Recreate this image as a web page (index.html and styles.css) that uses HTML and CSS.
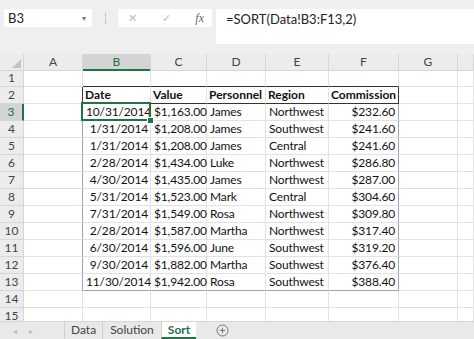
FILE: index.html
```html
<!DOCTYPE html>
<html lang="en">
<head>
    <meta charset="UTF-8">
    <meta name="viewport" content="width=device-width, initial-scale=1.0">
    <title>Sort</title>
    <link rel="stylesheet" href="styles.css">
</head>
<body>
    <div class="app">
        <header class="topbar">
            <div class="namebox">
                <span>B3</span>
                <span class="drop">&#9662;</span>
            </div>
            <div class="grip"></div>
            <div class="buttons">
                <span class="btn">&#10005;</span>
                <span class="btn">&#10003;</span>
                <span class="btn fx">fx</span>
            </div>
            <div class="formula">=SORT(Data!B3:F13,2)</div>
        </header>

        <main class="sheet">
            <div class="row head">
                <div class="corner"><span class="tri"></span></div>
                <div class="ch">A</div>
                <div class="ch sel">B</div>
                <div class="ch">C</div>
                <div class="ch">D</div>
                <div class="ch">E</div>
                <div class="ch">F</div>
                <div class="ch">G</div>
                <div class="ch"></div>
            </div>
            <div class="row">
                <div class="rh">1</div>
                <div class="c"></div>
                <div class="c tt"></div>
                <div class="c tt"></div>
                <div class="c tt"></div>
                <div class="c tt"></div>
                <div class="c tt"></div>
                <div class="c"></div>
                <div class="c"></div>
            </div>
            <div class="row">
                <div class="rh">2</div>
                <div class="c edge-dark"></div>
                <div class="c hd">Date</div>
                <div class="c hd">Value</div>
                <div class="c hd">Personnel</div>
                <div class="c hd">Region</div>
                <div class="c hd last">Commission</div>
                <div class="c"></div>
                <div class="c"></div>
            </div>
            <div class="row">
                <div class="rh sel">3</div>
                <div class="c edge"></div>
                <div class="c r active">10/31/2014</div>
                <div class="c r">$1,163.00</div>
                <div class="c">James</div>
                <div class="c">Northwest</div>
                <div class="c r tr">$232.60</div>
                <div class="c"></div>
                <div class="c"></div>
            </div>
            <div class="row">
                <div class="rh">4</div>
                <div class="c edge"></div>
                <div class="c r">1/31/2014</div>
                <div class="c r">$1,208.00</div>
                <div class="c">James</div>
                <div class="c">Southwest</div>
                <div class="c r tr">$241.60</div>
                <div class="c"></div>
                <div class="c"></div>
            </div>
            <div class="row">
                <div class="rh">5</div>
                <div class="c edge"></div>
                <div class="c r">1/31/2014</div>
                <div class="c r">$1,208.00</div>
                <div class="c">James</div>
                <div class="c">Central</div>
                <div class="c r tr">$241.60</div>
                <div class="c"></div>
                <div class="c"></div>
            </div>
            <div class="row">
                <div class="rh">6</div>
                <div class="c edge"></div>
                <div class="c r">2/28/2014</div>
                <div class="c r">$1,434.00</div>
                <div class="c">Luke</div>
                <div class="c">Northwest</div>
                <div class="c r tr">$286.80</div>
                <div class="c"></div>
                <div class="c"></div>
            </div>
            <div class="row">
                <div class="rh">7</div>
                <div class="c edge"></div>
                <div class="c r">4/30/2014</div>
                <div class="c r">$1,435.00</div>
                <div class="c">James</div>
                <div class="c">Northwest</div>
                <div class="c r tr">$287.00</div>
                <div class="c"></div>
                <div class="c"></div>
            </div>
            <div class="row">
                <div class="rh">8</div>
                <div class="c edge"></div>
                <div class="c r">5/31/2014</div>
                <div class="c r">$1,523.00</div>
                <div class="c">Mark</div>
                <div class="c">Central</div>
                <div class="c r tr">$304.60</div>
                <div class="c"></div>
                <div class="c"></div>
            </div>
            <div class="row">
                <div class="rh">9</div>
                <div class="c edge"></div>
                <div class="c r">7/31/2014</div>
                <div class="c r">$1,549.00</div>
                <div class="c">Rosa</div>
                <div class="c">Northwest</div>
                <div class="c r tr">$309.80</div>
                <div class="c"></div>
                <div class="c"></div>
            </div>
            <div class="row">
                <div class="rh">10</div>
                <div class="c edge"></div>
                <div class="c r">2/28/2014</div>
                <div class="c r">$1,587.00</div>
                <div class="c">Martha</div>
                <div class="c">Northwest</div>
                <div class="c r tr">$317.40</div>
                <div class="c"></div>
                <div class="c"></div>
            </div>
            <div class="row">
                <div class="rh">11</div>
                <div class="c edge"></div>
                <div class="c r">6/30/2014</div>
                <div class="c r">$1,596.00</div>
                <div class="c">June</div>
                <div class="c">Southwest</div>
                <div class="c r tr">$319.20</div>
                <div class="c"></div>
                <div class="c"></div>
            </div>
            <div class="row">
                <div class="rh">12</div>
                <div class="c edge"></div>
                <div class="c r">9/30/2014</div>
                <div class="c r">$1,882.00</div>
                <div class="c">Martha</div>
                <div class="c">Southwest</div>
                <div class="c r tr">$376.40</div>
                <div class="c"></div>
                <div class="c"></div>
            </div>
            <div class="row">
                <div class="rh">13</div>
                <div class="c edge"></div>
                <div class="c r tb">11/30/2014</div>
                <div class="c r tb">$1,942.00</div>
                <div class="c tb">Rosa</div>
                <div class="c tb">Southwest</div>
                <div class="c r tr tb">$388.40</div>
                <div class="c"></div>
                <div class="c"></div>
            </div>
            <div class="row">
                <div class="rh">14</div>
                <div class="c"></div>
                <div class="c"></div>
                <div class="c"></div>
                <div class="c"></div>
                <div class="c"></div>
                <div class="c"></div>
                <div class="c"></div>
                <div class="c"></div>
            </div>
            <div class="row">
                <div class="rh">15</div>
                <div class="c"></div>
                <div class="c"></div>
                <div class="c"></div>
                <div class="c"></div>
                <div class="c"></div>
                <div class="c"></div>
                <div class="c"></div>
                <div class="c"></div>
            </div>
        </main>

        <footer class="tabs">
            <div class="arrows">
                <span>&#9666;</span>
                <span>&#9656;</span>
            </div>
            <div class="tab">Data</div>
            <div class="tab solution">Solution</div>
            <div class="tab active-tab">Sort</div>
            <div class="add">
                <svg width="13" height="13" viewBox="0 0 13 13">
                    <circle cx="6.5" cy="6.5" r="5.5" fill="none" stroke="#777" stroke-width="1"/>
                    <path d="M6.5 3.8v5.4M3.8 6.5h5.4" stroke="#777" stroke-width="1"/>
                </svg>
            </div>
        </footer>
    </div>
</body>
</html>
```

FILE: styles.css
```css
html, body {
    margin: 0;
    padding: 0;
}
body {
    font-family: Lato, "Open Sans", sans-serif;
    color: #111;
}

.app {
    width: 474px;
    height: 339px;
    display: flex;
    flex-direction: column;
    overflow: hidden;
    background-color: #fff;
}

/* formula bar */
.topbar {
    height: 54px;
    flex-shrink: 0;
    box-sizing: border-box;
    padding-top: 9px;
    display: flex;
    align-items: flex-start;
    background-color: #efefef;
}
.namebox {
    margin-left: 4px;
    width: 88px;
    height: 18px;
    box-sizing: border-box;
    padding: 0 6px 0 4px;
    display: flex;
    align-items: center;
    justify-content: space-between;
    background-color: #fff;
    font-size: 13px;
    color: #222;
}
.drop {
    font-size: 8px;
    color: #777;
}
.grip {
    margin: 4px 0 0 13px;
    width: 0;
    height: 11px;
    border-left: 1px dotted #aaa;
}
.buttons {
    margin-left: 12px;
    width: 94px;
    height: 18px;
    box-sizing: border-box;
    padding: 0 8px 0 10px;
    display: flex;
    align-items: center;
    justify-content: space-between;
    background-color: #fff;
}
.btn {
    font-size: 11px;
    color: #bbb;
}
.fx {
    font-family: "Liberation Serif", serif;
    font-style: italic;
    font-size: 12px;
    color: #666;
}
.formula {
    margin-left: 4px;
    flex-grow: 1;
    height: 35px;
    box-sizing: border-box;
    padding: 2px 10px;
    background-color: #fff;
    font-size: 13px;
    color: #222;
}

/* grid */
.sheet {
    flex-grow: 1;
    overflow: hidden;
}
.row {
    display: grid;
    grid-template-columns: 24px 59px 68px 56px 59px 63px 70px 59px 16px;
    height: 17px;
}
.row.head {
    height: 16px;
}
.corner {
    position: relative;
    background-color: #ececec;
    border-right: 1px solid #d6d6d6;
    border-bottom: 1px solid #d6d6d6;
}
.tri {
    position: absolute;
    right: 2px;
    bottom: 2px;
    width: 0;
    height: 0;
    border-left: 9px solid transparent;
    border-bottom: 9px solid #c4c4c4;
}
.ch {
    box-sizing: border-box;
    background-color: #ececec;
    border-right: 1px solid #d6d6d6;
    border-bottom: 1px solid #d6d6d6;
    text-align: center;
    font-size: 12px;
    line-height: 15px;
    color: #444;
}
.ch.sel {
    background-color: #d4d4d4;
    color: #217346;
    border-bottom: 2px solid #217346;
}
.rh {
    box-sizing: border-box;
    background-color: #ececec;
    border-right: 1px solid #d6d6d6;
    border-bottom: 1px solid #d6d6d6;
    text-align: center;
    font-size: 12px;
    line-height: 16px;
    color: #444;
}
.rh.sel {
    background-color: #d4d4d4;
    color: #217346;
    border-right: 2px solid #217346;
}
.c {
    box-sizing: border-box;
    border-right: 1px solid #e2e2e2;
    border-bottom: 1px solid #e2e2e2;
    padding: 0 2px 0 3px;
    font-size: 12px;
    line-height: 16px;
    letter-spacing: -0.15px;
    white-space: nowrap;
}
.c.r {
    text-align: right;
}

/* table outline */
.c.tt {
    border-bottom-color: #333;
}
.c.edge-dark {
    border-right-color: #333;
}
.c.hd {
    font-weight: bold;
    padding-left: 2px;
    letter-spacing: 0;
    border-bottom-color: #333;
}
.c.hd.last {
    border-right-color: #333;
}
.c.edge {
    border-right-color: #9aa6b4;
}
.c.tr {
    border-right-color: #9aa6b4;
    padding-right: 3px;
}
.c.tb {
    border-bottom-color: #9aa6b4;
}

/* active cell */
.active {
    position: relative;
}
.active::after {
    content: "";
    position: absolute;
    left: -2px;
    top: -2px;
    right: -1px;
    bottom: -1px;
    border: 2px solid #217346;
}
.active::before {
    content: "";
    position: absolute;
    right: -4px;
    bottom: -4px;
    width: 5px;
    height: 5px;
    background-color: #217346;
    border: 1px solid #fff;
    z-index: 1;
}

/* sheet tabs */
.tabs {
    height: 17px;
    flex-shrink: 0;
    display: flex;
    align-items: stretch;
    background-color: #e9e9e9;
    border-top: 1px solid #d6d6d6;
    font-size: 12px;
    color: #444;
}
.arrows {
    width: 64px;
    box-sizing: border-box;
    padding-left: 13px;
    display: flex;
    gap: 12px;
    align-items: center;
    font-size: 8px;
    color: #bbb;
}
.tab {
    padding: 0 6px;
    border-left: 1px solid #cfcfcf;
    line-height: 16px;
}
.tab.solution {
    padding: 0 7px;
}
.active-tab {
    background-color: #fff;
    color: #217346;
    font-weight: bold;
    border-bottom: 2px solid #217346;
    line-height: 15px;
}
.add {
    margin-left: 20px;
    display: flex;
    align-items: center;
}
```
